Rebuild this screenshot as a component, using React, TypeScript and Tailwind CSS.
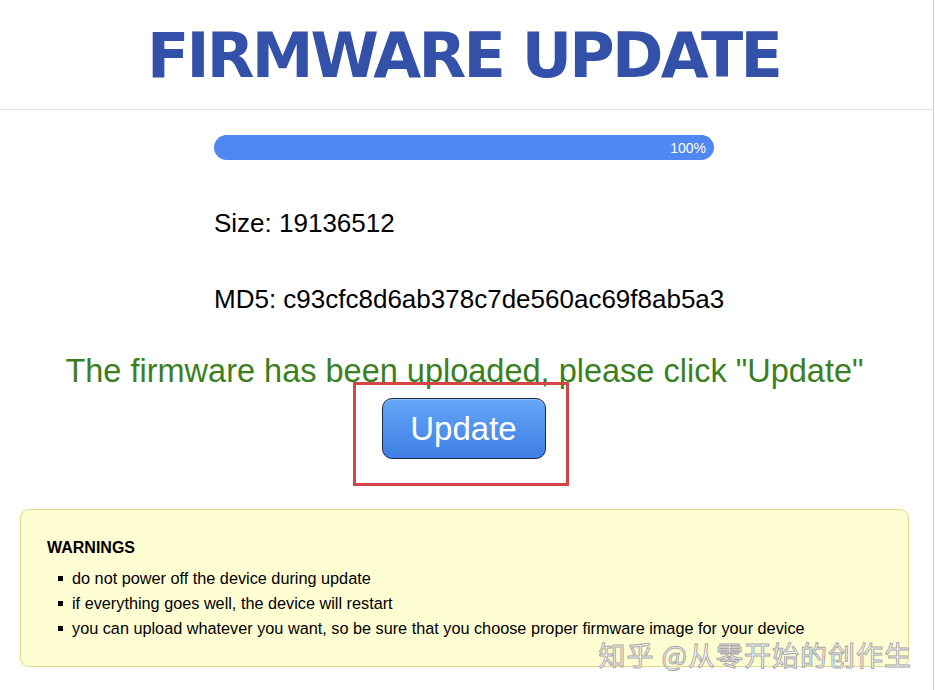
export default function App() {
  return (
    <div className="w-[935px] h-[690px] bg-white overflow-hidden" style={{ fontFamily: '"Liberation Sans", Arial, sans-serif' }}>
      <div className="w-[934px] h-[690px] border-r border-[#d0d0d0]">
        <div className="h-[110px] border-b border-[#e2e2e2] flex items-center justify-center pr-[6px]">
          <h1 className="text-[62px] font-bold text-[#3451a9] leading-none tracking-[-2.8px] pt-[2px]" style={{ fontFamily: '"DejaVu Sans", Verdana, sans-serif' }}>
            FIRMWARE UPDATE
          </h1>
        </div>
        <div className="pl-[214px] pt-[25px]">
          <div className="w-[500px] h-[25px] rounded-full bg-[#4f88f0] flex items-center justify-end pr-[8px]">
            <span className="text-white text-[14px] leading-none">100%</span>
          </div>
          <div className="mt-[48px] text-[26px] text-black leading-[30px]">Size: 19136512</div>
          <div className="mt-[46px] text-[26px] text-black leading-[30px]">MD5: c93cfc8d6ab378c7de560ac69f8ab5a3</div>
        </div>
        <div className="mt-[39px] text-center text-[32.5px] leading-[36px] text-[#3b7f1f] pr-[4px]">
          The firmware has been uploaded, please click "Update"
        </div>
        <div className="flex justify-center mt-[-7px]">
          <div className="w-[216px] h-[104px] border-[3px] border-[#d64545] flex justify-start pl-[26px] pt-[13px] ml-[-12px]">
            <div className="w-[164px] h-[61px] rounded-[10px] border border-[#1d2b48] bg-gradient-to-b from-[#64a6f6] to-[#3f7fe6] flex items-center justify-center text-white text-[33px] leading-none shadow-[inset_0_1px_0_rgba(255,255,255,0.3)]">
              Update
            </div>
          </div>
        </div>
        <div className="mx-[20px] mt-[23px] w-[889px] h-[158px] rounded-[9px] border border-[#e2d98a] bg-[#fffdd2] pl-[26px] pt-[29px] relative">
          <div className="text-[16px] font-bold text-black leading-[18px]">WARNINGS</div>
          <ul className="mt-[9px] text-[16.25px] text-black leading-[25px]">
            {[
              'do not power off the device during update',
              'if everything goes well, the device will restart',
              'you can upload whatever you want, so be sure that you choose proper firmware image for your device',
            ].map((t) => (
              <li key={t} className="flex items-center">
                <span className="w-[5px] h-[5px] bg-black ml-[11px] mr-[9px]" />
                {t}
              </li>
            ))}
          </ul>
          <div
            className="absolute right-[-4px] bottom-[-2px] text-[27px] leading-none text-white tracking-[1px]"
            style={{ fontFamily: '"Noto Sans CJK SC", sans-serif', WebkitTextStroke: '1px #a8a8a8' }}
          >
            知乎 @从零开始的创作生
          </div>
        </div>
      </div>
    </div>
  );
}
